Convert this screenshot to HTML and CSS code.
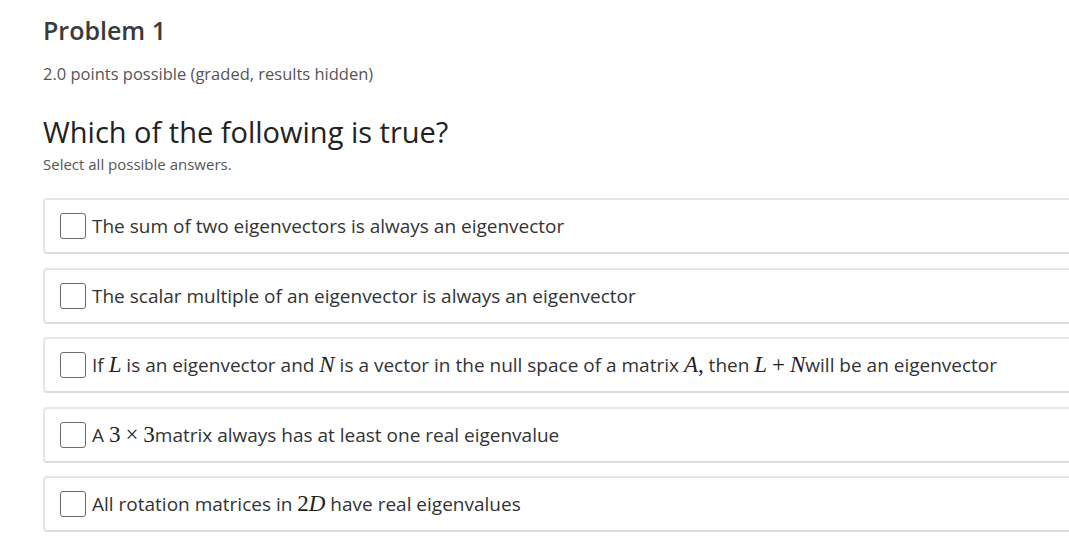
FILE: index.html
```html
<!DOCTYPE html>
<html>
<head>
<meta charset="utf-8">
<link rel="stylesheet" href="styles.css">
</head>
<body>
<div class="page">
  <h2 class="title">Problem 1</h2>
  <div class="points">2.0 points possible (graded, results hidden)</div>
  <h3 class="question">Which of the following is true?</h3>
  <div class="hint">Select all possible answers.</div>
  <div class="options">
    <label class="option"><span class="box"></span><span class="text">The sum of two eigenvectors is always an eigenvector</span></label>
    <label class="option"><span class="box"></span><span class="text">The scalar multiple of an eigenvector is always an eigenvector</span></label>
    <label class="option"><span class="box"></span><span class="text">If <span class="m mi">L</span> is an eigenvector and <span class="m mi">N</span> is a vector in the null space of a matrix <span class="m mi">A</span><span class="m">,</span> then <span class="m mi">L</span> <span class="m">+</span> <span class="m mi">N</span>will be an eigenvector</span></label>
    <label class="option"><span class="box"></span><span class="text">A <span class="m">3</span> <span class="m">×</span> <span class="m">3</span>matrix always has at least one real eigenvalue</span></label>
    <label class="option"><span class="box"></span><span class="text">All rotation matrices in <span class="m">2</span><span class="m mi">D</span> have real eigenvalues</span></label>
  </div>
</div>
</body>
</html>
```
FILE: styles.css
```css
html, body {
  margin: 0;
  padding: 0;
  background: #fff;
  overflow: hidden;
}
.page {
  padding: 14px 0 0 43px;
  width: 1100px;
  font-family: "Open Sans", "Noto Sans", sans-serif;
  color: #333;
}
.title {
  margin: 0;
  font-size: 25px;
  font-weight: 600;
  line-height: 32px;
  color: #3a3a3a;
}
.points {
  margin-top: 18px;
  font-size: 16.5px;
  line-height: 20px;
  color: #555;
}
.question {
  margin: 29px 0 0 0;
  font-size: 29px;
  font-weight: 400;
  line-height: 38px;
  color: #222;
}
.hint {
  margin-top: 4px;
  font-size: 15px;
  line-height: 18px;
  color: #555;
}
.options {
  margin-top: 25px;
  display: flex;
  flex-direction: column;
  gap: 13.5px;
}
.option {
  display: flex;
  align-items: center;
  height: 52px;
  padding: 0 0 0 15px;
  border: 2px solid #e6e6e6;
  border-bottom-color: #dcdcdc;
  border-radius: 4px;
  font-size: 19px;
  color: #333;
}
.box {
  width: 24px;
  height: 24px;
  border: 1.5px solid #6b6b6b;
  border-radius: 3px;
  margin-right: 6px;
  flex: none;
}
.text {
  white-space: nowrap;
}
.m {
  font-family: "Liberation Serif", "DejaVu Serif", serif;
  font-size: 23px;
  color: #222;
}
.mi {
  font-style: italic;
}
```
